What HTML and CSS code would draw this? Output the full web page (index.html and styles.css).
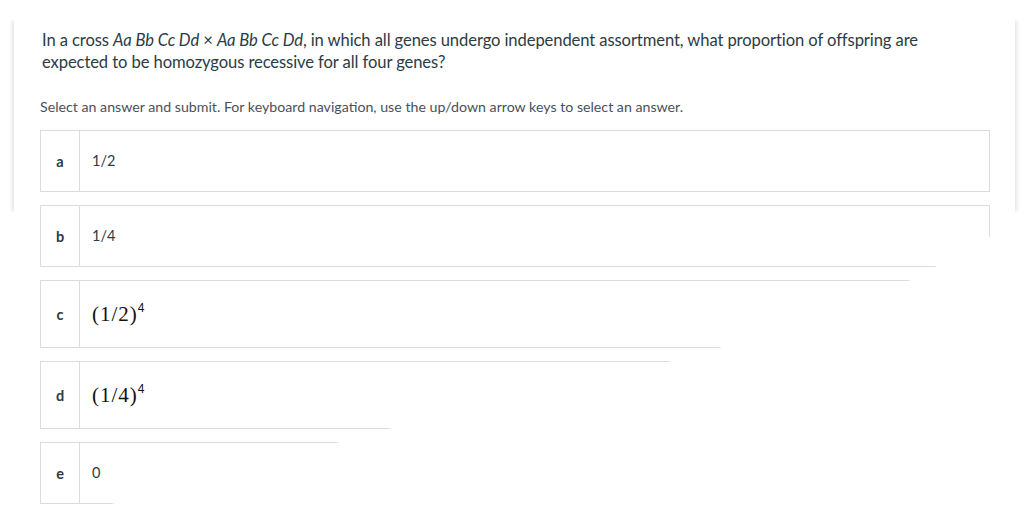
FILE: index.html
```html
<!DOCTYPE html>
<html lang="en">
<head>
<meta charset="utf-8">
<title>Question</title>
<link rel="stylesheet" href="styles.css">
</head>
<body>
<div class="page">
  <div class="card">
    <p class="question">In a cross <i>Aa Bb Cc Dd</i> × <i>Aa Bb Cc Dd</i>, in which all genes undergo independent assortment, what proportion of offspring are expected to be homozygous recessive for all four genes?</p>
    <p class="instructions">Select an answer and submit. For keyboard navigation, use the up/down arrow keys to select an answer.</p>
    <ul class="options">
      <li class="option"><span class="letter">a</span><span class="answer">1/2</span></li>
      <li class="option"><span class="letter">b</span><span class="answer">1/4</span></li>
      <li class="option math-row"><span class="letter">c</span><span class="answer math">(1/2)<sup>4</sup></span></li>
      <li class="option math-row"><span class="letter">d</span><span class="answer math">(1/4)<sup>4</sup></span></li>
      <li class="option"><span class="letter">e</span><span class="answer">0</span></li>
    </ul>
  </div>
  <div class="wipe"></div>
</div>
</body>
</html>
```
FILE: styles.css
```css
* { box-sizing: border-box; }
html, body { margin: 0; padding: 0; background: #fff; }
body {
  font-family: Lato, "Liberation Sans", sans-serif;
  color: #2d3b45;
  width: 1030px;
  height: 513px;
  overflow: hidden;
}
.page {
  position: relative;
  height: 513px;
  padding: 20px 0 0 14px;
}
.card {
  position: relative;
  width: 1001px;
  padding: 9px 25px 0 26px;
  background: #fff;
}
.card::before {
  content: "";
  position: absolute;
  left: 0;
  top: 0;
  width: 100%;
  height: 192px;
  box-shadow: -2px 0 4px 0 rgba(0,0,0,0.10), 2px 0 4px 0 rgba(0,0,0,0.10);
  clip-path: inset(0 -12px 0 -12px);
  pointer-events: none;
}
.question {
  margin: 0 0 0 2px;
  font-size: 16.6px;
  line-height: 22px;
  letter-spacing: -0.1px;
  width: 895px;
}
.question i { font-style: italic; }
.instructions {
  margin: 24px 0 13px 0;
  font-size: 14.2px;
  line-height: 20px;
  color: #4a5158;
}
.options {
  list-style: none;
  margin: 0;
  padding: 0;
  display: flex;
  flex-direction: column;
  gap: 13px;
}
.option {
  display: flex;
  border: 1px solid #dcdcdc;
  width: 950px;
  background: #fff;
}
.letter {
  width: 39px;
  flex: none;
  border-right: 1px solid #dcdcdc;
  display: flex;
  align-items: center;
  justify-content: center;
  font-size: 14.5px;
  font-weight: 700;
  color: #2d3b45;
}
.answer {
  padding: 20px 12px;
  font-size: 14.5px;
  line-height: 20px;
  color: #2d3b45;
}
.math-row .answer { padding: 20px 12px; line-height: 26px; }
.math {
  font-family: "Liberation Serif", "DejaVu Serif", serif;
  font-size: 21px;
  letter-spacing: 1px;
  color: #111;
}
.math sup {
  font-family: "Liberation Sans", sans-serif;
  font-size: 12px;
  vertical-align: 9px;
  line-height: 0;
  margin-left: 0;
}
.wipe {
  position: absolute;
  left: 0;
  top: 0;
  width: 1030px;
  height: 513px;
  background: #fff;
  clip-path: polygon(1030px 212px, 989px 237px, 937px 266px, 911px 280px, 722px 347px, 672px 361px, 388px 429px, 340px 442px, 115px 503px, 80px 513px, 1030px 513px);
  pointer-events: none;
}
```
